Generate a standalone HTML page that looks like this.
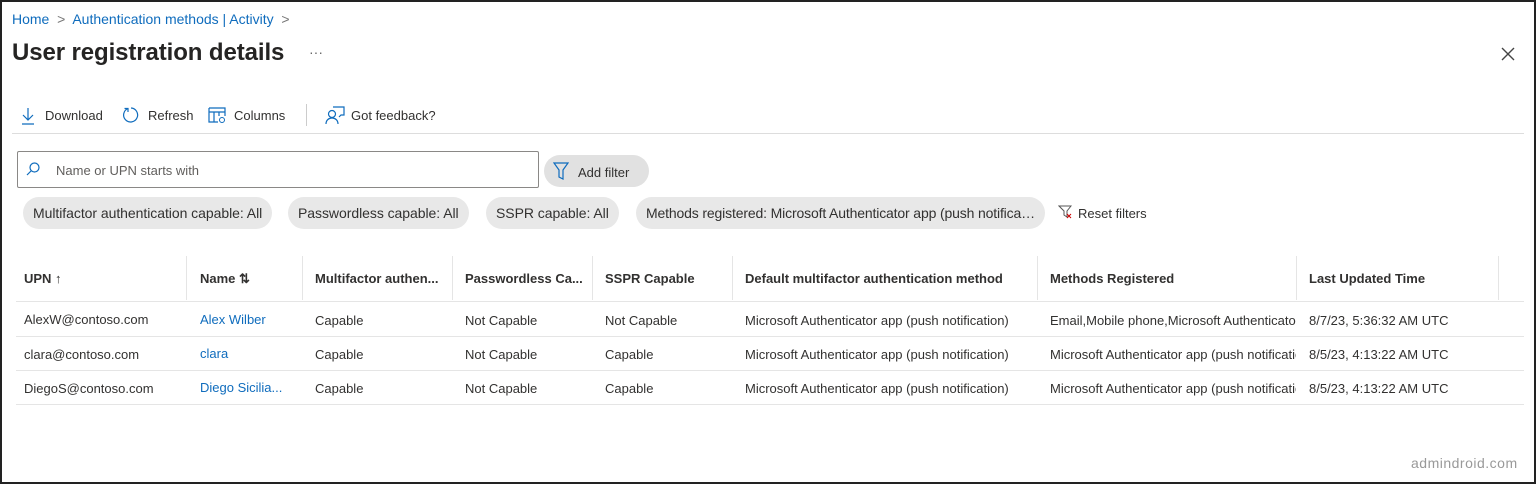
<!DOCTYPE html>
<html><head><style>
*{margin:0;padding:0;box-sizing:border-box}
body{width:1536px;height:484px;background:#fff;font-family:"Liberation Sans",sans-serif;color:#323130;position:relative;overflow:hidden}
.frame{position:absolute;left:0;top:0;width:1536px;height:484px;border:2px solid #222}
.a{position:absolute;white-space:nowrap}
.bc{top:11px;font-size:14px;color:#0f6cbd}
.t{font-size:13px}
.pill{position:absolute;top:197px;height:32px;border-radius:16px;background:#e8e8e8;font-size:14px;line-height:32px;padding:0 10px;color:#323130;letter-spacing:-0.05px}
.h{top:271px;font-size:13px;font-weight:bold;color:#323130}
.c{font-size:13px;color:#323130}
.lk{color:#0f6cbd}
.vl{position:absolute;top:256px;height:44px;width:1px;background:#e5e5e5}
.hl{position:absolute;left:16px;width:1508px;height:1px;background:#e5e5e5}
</style></head><body>
<div class="frame"></div>
<div class="a bc" style="left:12px">Home <span style="color:#777">&nbsp;&gt;&nbsp;</span> Authentication methods | Activity <span style="color:#777">&nbsp;&gt;</span></div>
<div class="a" style="left:12px;top:39px;font-size:24px;font-weight:bold;color:#252423;letter-spacing:-0.1px">User registration details</div>
<div class="a" style="left:309px;top:44px;font-size:14px;color:#666">···</div>
<svg class="a" style="left:1501px;top:47px" width="14" height="14" viewBox="0 0 14 14"><path d="M1 1l12 12M13 1L1 13" stroke="#444" stroke-width="1.4"/></svg>
<svg class="a" style="left:21px;top:107px" width="14" height="18" viewBox="0 0 14 18"><path d="M7 1v12M2 8l5 5 5-5M1 17h12" stroke="#0f6cbd" fill="none" stroke-width="1.2"/></svg>
<div class="a t" style="left:45px;top:108px">Download</div>
<svg class="a" style="left:122px;top:106px" width="18" height="18" viewBox="0 0 18 18"><path d="M6 2.5A7 7 0 1 0 9 2" stroke="#0f6cbd" fill="none" stroke-width="1.2"/><path d="M2.5 2.5h3.5v3.5" stroke="#0f6cbd" fill="none" stroke-width="1.2"/></svg>
<div class="a t" style="left:148px;top:108px">Refresh</div>
<svg class="a" style="left:208px;top:107px" width="18" height="17" viewBox="0 0 18 17"><path d="M1 1h16v8M1 1v14h9M1 5h16M6 5v10M11 5v4" stroke="#0f6cbd" fill="none" stroke-width="1.2"/><circle cx="14" cy="13" r="2.5" stroke="#0f6cbd" fill="none"/></svg>
<div class="a t" style="left:234px;top:108px">Columns</div>
<div class="a" style="left:306px;top:104px;width:1px;height:22px;background:#ccc"></div>
<svg class="a" style="left:325px;top:106px" width="20" height="19" viewBox="0 0 20 19"><circle cx="7" cy="8" r="3.5" stroke="#0f6cbd" fill="none" stroke-width="1.2"/><path d="M1 18c0-4 3-6 6-6s6 2 6 6M8 1h11v8h-3l-2 2" stroke="#0f6cbd" fill="none" stroke-width="1.2"/></svg>
<div class="a t" style="left:351px;top:108px">Got feedback?</div>
<div class="a" style="left:12px;top:133px;width:1512px;height:1px;background:#ddd"></div>
<div class="a" style="left:17px;top:151px;width:522px;height:37px;border:1px solid #8a8886;border-radius:2px"></div>
<svg class="a" style="left:26px;top:162px" width="14" height="14" viewBox="0 0 14 14"><circle cx="8.5" cy="5.5" r="4.5" stroke="#0f6cbd" fill="none" stroke-width="1.2"/><path d="M5 9l-4 4" stroke="#0f6cbd" stroke-width="1.2"/></svg>
<div class="a t" style="left:56px;top:163px;color:#605e5c">Name or UPN starts with</div>
<div class="a" style="left:544px;top:155px;width:105px;height:32px;border-radius:16px;background:#e1e1e1"></div>
<svg class="a" style="left:553px;top:162px" width="16" height="18" viewBox="0 0 16 18"><path d="M1 1h14l-5 7v9l-4-2V8z" stroke="#0f6cbd" fill="none" stroke-width="1.2"/></svg>
<div class="a t" style="left:578px;top:165px">Add filter</div>
<div class="pill" style="left:23px">Multifactor authentication capable: All</div>
<div class="pill" style="left:288px">Passwordless capable: All</div>
<div class="pill" style="left:486px">SSPR capable: All</div>
<div class="pill" style="left:636px;letter-spacing:-0.15px">Methods registered: Microsoft Authenticator app (push notifica…</div>
<svg class="a" style="left:1058px;top:205px" width="14" height="14" viewBox="0 0 14 14"><path d="M1 1h12l-4 5v6l-3-2V6z" stroke="#555" fill="none"/><path d="M9 9l4 4M13 9l-4 4" stroke="#c00"/></svg>
<div class="a t" style="left:1078px;top:206px">Reset filters</div>
<div class="a h" style="left:24px">UPN ↑</div>
<div class="a h" style="left:200px">Name ⇅</div>
<div class="a h" style="left:315px">Multifactor authen...</div>
<div class="a h" style="left:465px">Passwordless Ca...</div>
<div class="a h" style="left:605px">SSPR Capable</div>
<div class="a h" style="left:745px">Default multifactor authentication method</div>
<div class="a h" style="left:1050px">Methods Registered</div>
<div class="a h" style="left:1309px">Last Updated Time</div>
<div class="vl" style="left:186px"></div><div class="vl" style="left:302px"></div><div class="vl" style="left:452px"></div><div class="vl" style="left:592px"></div><div class="vl" style="left:732px"></div><div class="vl" style="left:1037px"></div><div class="vl" style="left:1296px"></div><div class="vl" style="left:1498px"></div>
<div class="hl" style="top:301px"></div><div class="hl" style="top:336px"></div><div class="hl" style="top:370px"></div><div class="hl" style="top:404px"></div>
<div class="a c" style="left:24px;top:312px">AlexW@contoso.com</div>
<div class="a c lk" style="left:200px;top:312px">Alex Wilber</div>
<div class="a c" style="left:315px;top:313px">Capable</div>
<div class="a c" style="left:465px;top:313px">Not Capable</div>
<div class="a c" style="left:605px;top:313px">Not Capable</div>
<div class="a c" style="left:745px;top:313px">Microsoft Authenticator app (push notification)</div>
<div class="a c" style="left:1050px;top:313px;width:246px;overflow:hidden">Email,Mobile phone,Microsoft Authenticator</div>
<div class="a c" style="left:1309px;top:313px">8/7/23, 5:36:32 AM UTC</div>
<div class="a c" style="left:24px;top:347px">clara@contoso.com</div>
<div class="a c lk" style="left:200px;top:346px">clara</div>
<div class="a c" style="left:315px;top:347px">Capable</div>
<div class="a c" style="left:465px;top:347px">Not Capable</div>
<div class="a c" style="left:605px;top:347px">Capable</div>
<div class="a c" style="left:745px;top:347px">Microsoft Authenticator app (push notification)</div>
<div class="a c" style="left:1050px;top:347px;width:246px;overflow:hidden">Microsoft Authenticator app (push notification)</div>
<div class="a c" style="left:1309px;top:347px">8/5/23, 4:13:22 AM UTC</div>
<div class="a c" style="left:24px;top:381px">DiegoS@contoso.com</div>
<div class="a c lk" style="left:200px;top:380px">Diego Sicilia...</div>
<div class="a c" style="left:315px;top:381px">Capable</div>
<div class="a c" style="left:465px;top:381px">Not Capable</div>
<div class="a c" style="left:605px;top:381px">Capable</div>
<div class="a c" style="left:745px;top:381px">Microsoft Authenticator app (push notification)</div>
<div class="a c" style="left:1050px;top:381px;width:246px;overflow:hidden">Microsoft Authenticator app (push notification)</div>
<div class="a c" style="left:1309px;top:381px">8/5/23, 4:13:22 AM UTC</div>
<div class="a" style="left:1411px;top:455px;font-size:14px;color:#999;letter-spacing:0.5px">admindroid.com</div>
</body></html>
